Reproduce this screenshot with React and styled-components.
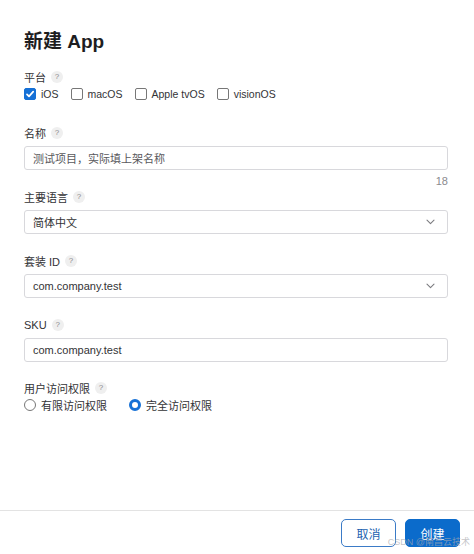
import React from 'react';
import styled, { createGlobalStyle } from 'styled-components';

const GlobalStyle = createGlobalStyle`
  html, body {
    margin: 0;
    padding: 0;
    background: #ffffff;
  }
  body {
    font-family: "Liberation Sans", "Noto Sans CJK SC", sans-serif;
    color: #1d1d1f;
  }
`;

const platforms = [
  { name: 'iOS', checked: true },
  { name: 'macOS', checked: false },
  { name: 'Apple tvOS', checked: false },
  { name: 'visionOS', checked: false }
];

const accessOptions = [
  { name: '有限访问权限', checked: false },
  { name: '完全访问权限', checked: true }
];

function Help() {
  return <HelpMark>?</HelpMark>;
}

function Chevron() {
  return (
    <svg width="9" height="6" viewBox="0 0 9 6" fill="none">
      <path d="M1 1.2l3.5 3.4L8 1.2" stroke="#7c7c80" strokeWidth="1.1" strokeLinecap="round" strokeLinejoin="round" />
    </svg>
  );
}

function Checkbox({ name, checked }) {
  return (
    <CheckItem>
      <CheckBox $checked={checked}>
        {checked && (
          <svg width="10" height="10" viewBox="0 0 10 10" fill="none">
            <path d="M2 5.3l2 2.1L8.2 2.6" stroke="#fff" strokeWidth="1.7" strokeLinecap="round" strokeLinejoin="round" />
          </svg>
        )}
      </CheckBox>
      {name}
    </CheckItem>
  );
}

function Radio({ name, checked }) {
  return (
    <RadioItem>
      <RadioDot $checked={checked} />
      {name}
    </RadioItem>
  );
}

export default function App() {
  return (
    <>
      <GlobalStyle />
      <Page>
        <Main>
          <Title>新建 App</Title>

          <Field $gap={15}>
            <Label>
              平台 <Help />
            </Label>
            <CheckRow>
              {platforms.map(p => (
                <Checkbox {...p} key={p.name} />
              ))}
            </CheckRow>
          </Field>

          <Field $gap={23}>
            <Label>
              名称 <Help />
            </Label>
            <Input>测试项目，实际填上架名称</Input>
            <Counter>18</Counter>
          </Field>

          <Field $gap={1}>
            <Label>
              主要语言 <Help />
            </Label>
            <Select>
              简体中文
              <Chevron />
            </Select>
          </Field>

          <Field $gap={19}>
            <Label>
              套装 ID <Help />
            </Label>
            <Select>
              com.company.test
              <Chevron />
            </Select>
          </Field>

          <Field $gap={19}>
            <Label>
              SKU <Help />
            </Label>
            <Input $dark>com.company.test</Input>
          </Field>

          <Field $gap={18}>
            <Label>
              用户访问权限 <Help />
            </Label>
            <RadioRow>
              {accessOptions.map(o => (
                <Radio {...o} key={o.name} />
              ))}
            </RadioRow>
          </Field>
        </Main>

        <Footer>
          <Button>取消</Button>
          <Button $primary>创建</Button>
          <Watermark>CSDN @南昌云技术</Watermark>
        </Footer>
      </Page>
    </>
  );
}

// Page
const Page = styled.div`
  display: flex;
  flex-direction: column;
  min-height: 100vh;
`;

const Main = styled.main`
  flex: 1;
  padding: 30px 26px 0 24px;
`;

const Title = styled.h1`
  margin: 0;
  font-size: 19px;
  line-height: 24px;
  font-weight: 700;
  color: #1d1d1f;
`;

// Fields
const Field = styled.section`
  margin-top: ${p => p.$gap}px;
  display: flex;
  flex-direction: column;
`;

const Label = styled.div`
  display: flex;
  align-items: center;
  gap: 2px;
  height: 16px;
  font-size: 11px;
  color: #333336;
`;

const HelpMark = styled.span`
  display: inline-flex;
  align-items: center;
  justify-content: center;
  width: 12px;
  height: 12px;
  margin-left: 3px;
  border-radius: 50%;
  background: #efefef;
  color: #8a8a8e;
  font-size: 8px;
  line-height: 1;
`;

const CheckRow = styled.div`
  margin-top: 1px;
  display: flex;
  align-items: center;
  height: 16px;
  gap: 12px;
`;

const CheckItem = styled.label`
  display: flex;
  align-items: center;
  gap: 5px;
  font-size: 10.5px;
  color: #333336;
`;

const CheckBox = styled.span`
  box-sizing: border-box;
  width: 12px;
  height: 12px;
  display: flex;
  align-items: center;
  justify-content: center;
  border-radius: 2px;
  border: 1px solid ${p => (p.$checked ? '#1570d6' : '#777777')};
  background: ${p => (p.$checked ? '#1570d6' : '#ffffff')};
`;

const fieldBox = `
  box-sizing: border-box;
  height: 24px;
  margin-top: 5px;
  display: flex;
  align-items: center;
  border: 1px solid #d8d8dc;
  border-radius: 3px;
  font-size: 11px;
`;

const Input = styled.div`
  ${fieldBox}
  padding: 0 8px;
  color: ${p => (p.$dark ? '#333336' : '#58585c')};
`;

const Select = styled.div`
  ${fieldBox}
  justify-content: space-between;
  padding: 0 12px 0 8px;
  color: #333336;
`;

const Counter = styled.div`
  margin-top: 4px;
  align-self: flex-end;
  font-size: 11px;
  line-height: 14px;
  color: #8a8a8e;
`;

const RadioRow = styled.div`
  margin-top: 1px;
  display: flex;
  align-items: center;
  height: 16px;
  gap: 22px;
`;

const RadioItem = styled.label`
  display: flex;
  align-items: center;
  gap: 5px;
  font-size: 11px;
  color: #333336;
`;

const RadioDot = styled.span`
  box-sizing: border-box;
  width: 12px;
  height: 12px;
  border-radius: 50%;
  border: ${p => (p.$checked ? '3px solid #1570d6' : '1px solid #777777')};
  background: #ffffff;
`;

// Footer
const Footer = styled.footer`
  position: relative;
  height: 44px;
  box-sizing: border-box;
  border-top: 1px solid #e3e3e3;
  display: flex;
  justify-content: flex-end;
  align-items: flex-start;
  gap: 9px;
  padding: 8px 14px 0 0;
`;

const Button = styled.button`
  box-sizing: border-box;
  width: 55px;
  height: 28px;
  border-radius: 5px;
  font-family: inherit;
  font-size: 12px;
  border: 1px solid ${p => (p.$primary ? '#0b6bcb' : '#3b7bc7')};
  background: ${p => (p.$primary ? '#0b6bcb' : '#ffffff')};
  color: ${p => (p.$primary ? '#ffffff' : '#1c5fb0')};
`;

const Watermark = styled.span`
  position: absolute;
  right: 4px;
  bottom: 6px;
  font-size: 9px;
  color: rgba(170, 170, 175, 0.7);
  pointer-events: none;
`;
